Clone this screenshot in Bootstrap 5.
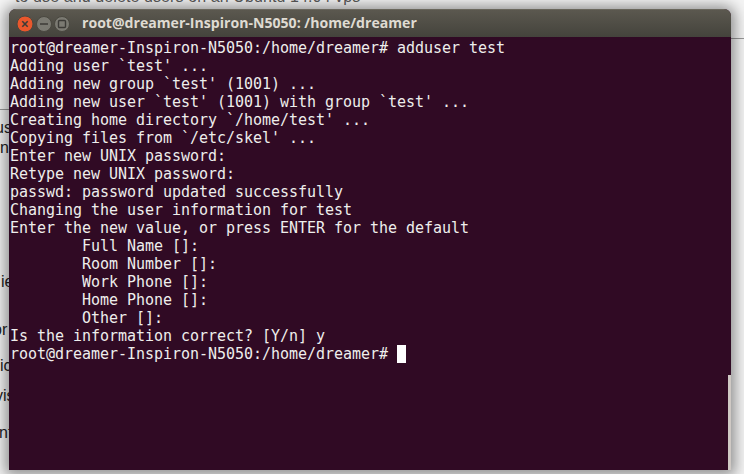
<!DOCTYPE html>
<html lang="en">
<head>
<meta charset="utf-8">
<title>Terminal</title>
<link href="https://cdn.jsdelivr.net/npm/bootstrap@5.3.0/dist/css/bootstrap.min.css" rel="stylesheet">
<style>
html,body{margin:0;height:100%;overflow:hidden;background:#fff}
.desk{width:744px;height:474px;overflow:hidden;position:relative;background:#f4f4f4}
.heading-cut{font:16px/20px "Liberation Sans",sans-serif;color:#5a5a5a;margin:-13px 0 0 15px;white-space:nowrap;letter-spacing:.1px}
.rule-left{position:absolute;left:0;top:109px;width:9px;height:1px;background:#999}
.rule-right{position:absolute;right:0;top:38px;width:13px;height:1px;background:#999}
.frag{font:16px/20px "Liberation Sans",sans-serif;color:#222;white-space:nowrap;display:block}
.f1{margin:111px 0 0 -5px}.f2{margin:0 0 0 0}.f3{margin:114px 0 0 1px}.f4{margin:28px 0 0 -7px}.f5{margin:16px 0 0 0}.f6{margin:10px 0 0 -5px}.f7{margin:17px 0 0 -1px}
.term-win{position:absolute;left:9px;top:9px;width:722px;height:461px;border-radius:7px 7px 0 0;background:#300a24;box-shadow:0 1px 14px 4px rgba(0,0,0,.42);overflow:hidden}
.term-bar{height:28px;background:linear-gradient(#5b584f,#44433c);border-top:1px solid #6a675d;padding-left:7px;gap:2px}
.term-title{font:700 14.1px/1 "Open Sans","Noto Sans",sans-serif;color:#dfdbd2;margin-left:10px;white-space:nowrap}
.term-body{margin:2px 0 0 1px;font:15px/18px "DejaVu Sans Mono",monospace;color:#eeeeec;letter-spacing:-.03px;white-space:pre;background:none;padding:0;overflow:visible}
.cursor-block{background:#fff;display:inline-block;width:9px;height:18px;vertical-align:top}
.term-scroll{position:absolute;right:0;top:366px;bottom:0;width:3px;background:#cfc9c4}
</style>
</head>
<body>
<div class="desk">
  <div class="heading-cut">to use and delete users on an Ubuntu 14.04 vps</div>
  <div class="rule-left"></div>
  <div class="rule-right"></div>
  <span class="frag f1">us</span>
  <span class="frag f2">n</span>
  <span class="frag f3">ie</span>
  <span class="frag f4">or</span>
  <span class="frag f5">ic</span>
  <span class="frag f6">vis</span>
  <span class="frag f7">nf</span>
  <div class="term-win">
    <div class="term-bar d-flex align-items-center">
      <svg width="18" height="18" viewBox="0 0 18 18"><circle cx="9" cy="9" r="8" fill="#e9572c" stroke="#4a4840"/><path d="M6.3 6.3l5.4 5.4M11.7 6.3l-5.4 5.4" stroke="#3c3b37" stroke-width="1.6"/></svg>
      <svg width="16" height="18" viewBox="0 0 16 18"><circle cx="8" cy="9" r="7.5" fill="#7b7a72" stroke="#4a4840"/><path d="M4 9h8" stroke="#3c3b37" stroke-width="1.6"/></svg>
      <svg width="16" height="18" viewBox="0 0 16 18"><circle cx="8" cy="9" r="7.5" fill="#7b7a72" stroke="#4a4840"/><rect x="4.5" y="5.5" width="7" height="7" rx="1" fill="none" stroke="#3c3b37" stroke-width="1.4"/></svg>
      <span class="term-title">root@dreamer-Inspiron-N5050: /home/dreamer</span>
    </div>
    <pre class="term-body">root@dreamer-Inspiron-N5050:/home/dreamer# adduser test
Adding user `test' ...
Adding new group `test' (1001) ...
Adding new user `test' (1001) with group `test' ...
Creating home directory `/home/test' ...
Copying files from `/etc/skel' ...
Enter new UNIX password:
Retype new UNIX password:
passwd: password updated successfully
Changing the user information for test
Enter the new value, or press ENTER for the default
        Full Name []:
        Room Number []:
        Work Phone []:
        Home Phone []:
        Other []:
Is the information correct? [Y/n] y
root@dreamer-Inspiron-N5050:/home/dreamer# <span class="cursor-block"></span></pre>
    <div class="term-scroll"></div>
  </div>
</div>
<script src="https://cdn.jsdelivr.net/npm/bootstrap@5.3.0/dist/js/bootstrap.bundle.min.js"></script>
</body>
</html>
